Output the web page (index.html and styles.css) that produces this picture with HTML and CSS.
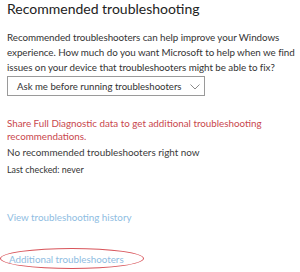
FILE: index.html
```html
<!DOCTYPE html>
<html lang="en">
<head>
<meta charset="UTF-8">
<title>Recommended troubleshooting</title>
<link rel="stylesheet" href="styles.css">
</head>
<body>
<div class="page">
<h2 class="title">Recommended troubleshooting</h2>
<p class="intro">Recommended troubleshooters can help improve your Windows<br>experience. How much do you want Microsoft to help when we find<br>issues on your device that troubleshooters might be able to fix?</p>
<div class="select">
<span>Ask me before running troubleshooters</span>
<svg class="chevron" width="10" height="6" viewBox="0 0 10 6"><path d="M0.5 0.5 L5 5 L9.5 0.5" fill="none" stroke="#8a8a8a" stroke-width="1"/></svg>
</div>
<p class="warn">Share Full Diagnostic data to get additional troubleshooting<br>recommendations.</p>
<p class="status">No recommended troubleshooters right now</p>
<p class="checked">Last checked: never</p>
<a class="link history" href="#">View troubleshooting history</a>
<div class="circled">
<a class="link" href="#">Additional troubleshooters</a>
</div>
</div>
</body>
</html>
```

FILE: styles.css
```css
* {box-sizing: border-box;margin: 0;padding: 0;}
body {background: #fff;font-family: "Lato", "Open Sans", sans-serif;color: #333;width: 300px;height: 272px;overflow: hidden;}
.page {padding: 0 0 0 7px;}
.title {font-weight: normal;font-size: 14px;line-height: 20px;color: #222;margin-top: -1px;}
.intro {font-size: 9.8px;line-height: 15px;margin-top: 11px;color: #333;white-space: nowrap;letter-spacing: -0.05px;}
.select {display: flex;align-items: center;gap: 8px;width: 198px;height: 20px;border: 1px solid #9a9a9a;margin-top: 1px;padding: 0 5px 0 9px;font-size: 9.6px;color: #333;white-space: nowrap;}
.chevron {margin-top: 1px;flex-shrink: 0;}
.warn {font-size: 9.8px;line-height: 13px;color: #c9474d;margin-top: 21px;white-space: nowrap;}
.status {font-size: 9.9px;line-height: 16px;margin-top: 1px;color: #3a3a3a;}
.checked {font-size: 8.9px;line-height: 12px;margin-top: 4px;color: #333;}
.link {display: block;font-size: 9.8px;line-height: 14px;color: #8fbde2;text-decoration: none;}
.history {margin-top: 34px;}
.circled {margin-top: 24px;margin-left: -7px;width: 144px;height: 21px;border: 1.3px solid #d8545a;border-radius: 50%;padding: 3px 0 0 8px;font-size: 9.8px;line-height: 14px;}
```
